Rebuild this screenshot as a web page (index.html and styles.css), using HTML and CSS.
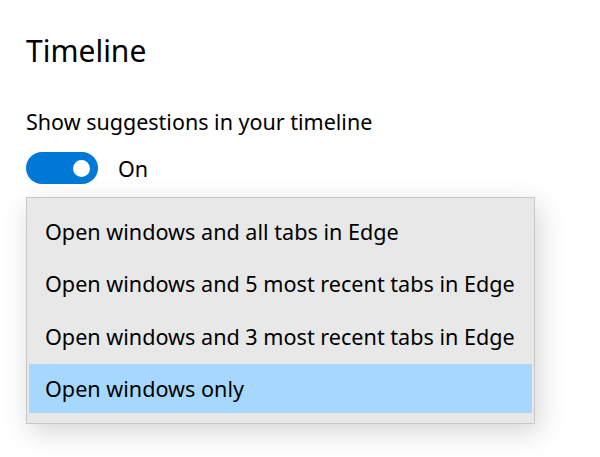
FILE: index.html
```html
<!DOCTYPE html>
<html>
<head>
<meta charset="utf-8">
<link rel="stylesheet" href="styles.css">
</head>
<body>
<main class="page">
  <h1 class="title">Timeline</h1>
  <p class="label">Show suggestions in your timeline</p>
  <div class="toggle-row">
    <span class="toggle"><span class="knob"></span></span>
    <span class="toggle-text">On</span>
  </div>
  <ul class="menu">
    <li class="item">Open windows and all tabs in Edge</li>
    <li class="item">Open windows and 5 most recent tabs in Edge</li>
    <li class="item">Open windows and 3 most recent tabs in Edge</li>
    <li class="item selected">Open windows only</li>
  </ul>
</main>
</body>
</html>
```

FILE: styles.css
```css
html, body {
  margin: 0;
  padding: 0;
  background: #ffffff;
}
body {
  font-family: "Noto Sans", "Open Sans", sans-serif;
  color: #000;
  width: 600px;
  height: 457px;
  overflow: hidden;
}
.page {
  padding: 0 0 0 26px;
}
.title {
  margin: 0;
  padding-top: 29px;
  font-weight: 400;
  font-size: 30px;
  line-height: 44px;
}
.label {
  margin: 0;
  padding-top: 35px;
  font-size: 21.5px;
  line-height: 28px;
}
.toggle-row {
  display: flex;
  align-items: center;
  gap: 20px;
  margin-top: 16px;
  height: 32px;
}
.toggle {
  width: 72px;
  height: 32px;
  border-radius: 16px;
  background: #0078d7;
  display: flex;
  align-items: center;
  justify-content: flex-end;
  padding-right: 8px;
  box-sizing: border-box;
}
.knob {
  width: 17px;
  height: 17px;
  border-radius: 50%;
  background: #fff;
}
.toggle-text {
  font-size: 21.5px;
}
.menu {
  list-style: none;
  margin: 13px 0 0 0;
  width: 509px;
  height: 227px;
  box-sizing: border-box;
  padding: 9px 2px 10px 2px;
  background: #e8e8e8;
  border: 1px solid #c8c8c8;
  box-shadow: 4px 8px 26px rgba(0,0,0,0.17);
  display: flex;
  flex-direction: column;
  gap: 3.5px;
}
.item {
  height: 49px;
  display: flex;
  align-items: center;
  padding-left: 16px;
  font-size: 21.6px;
}
.item.selected {
  background: #a6d8fe;
}
```
